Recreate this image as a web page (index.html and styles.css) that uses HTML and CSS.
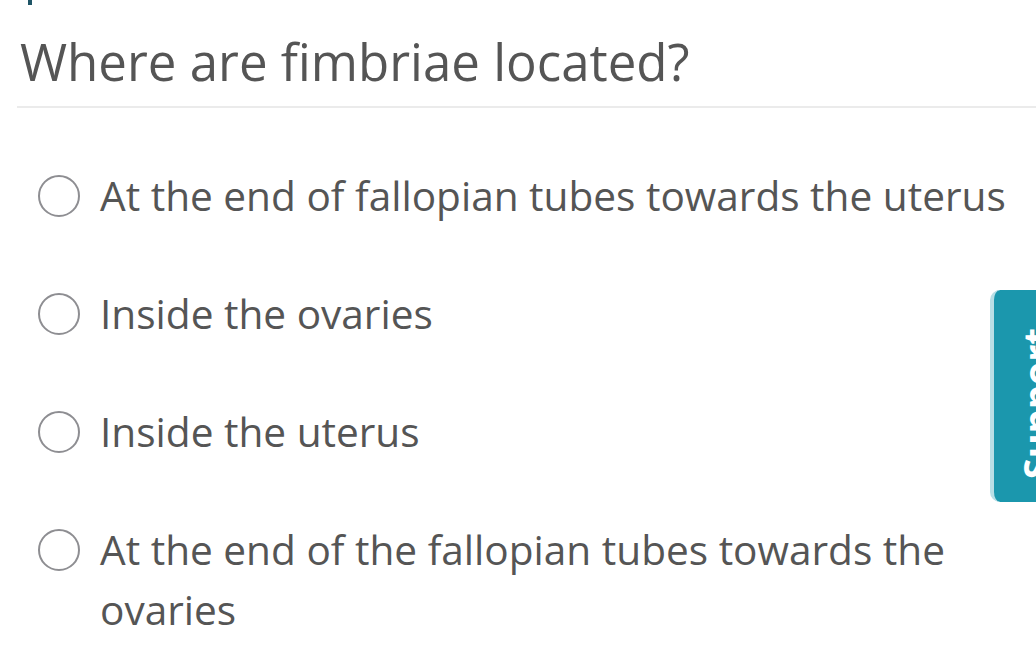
FILE: index.html
```html
<!DOCTYPE html>
<html lang="en">
<head>
    <meta charset="UTF-8">
    <meta name="viewport" content="width=device-width, initial-scale=1.0">
    <title>Question</title>
    <link rel="stylesheet" href="styles.css">
</head>
<body>
    <div class="top-mark"></div>

    <div class="question">
        <h1>Where are fimbriae located?</h1>
        <div class="divider"></div>

        <!-- Answers -->
        <div class="answers">
            <label class="answer">
                <span class="radio"></span>
                <span class="answer-text">At the end of fallopian tubes towards the uterus</span>
            </label>
            <label class="answer">
                <span class="radio"></span>
                <span class="answer-text">Inside the ovaries</span>
            </label>
            <label class="answer">
                <span class="radio"></span>
                <span class="answer-text">Inside the uterus</span>
            </label>
            <label class="answer">
                <span class="radio"></span>
                <span class="answer-text">At the end of the fallopian tubes towards the ovaries</span>
            </label>
        </div>
    </div>

    <!-- Support tab -->
    <div class="support-tab">
        <span>Support</span>
    </div>
</body>
</html>
```

FILE: styles.css
```css
body {
    margin: 0;
    background-color: #fff;
    font-family: "Open Sans", Arial, sans-serif;
    color: #555;
    overflow: hidden;
}
.top-mark {
    width: 4px;
    height: 5px;
    margin-left: 28px;
    background-color: #1f5566;
}
.question {
    padding-top: 26px;
}
.question h1 {
    font-size: 51px;
    font-weight: 400;
    line-height: 60px;
    margin: 0 0 15px 20px;
    color: #555;
}
.divider {
    height: 2px;
    margin-left: 17px;
    background-color: #ebebeb;
}
.answers {
    display: flex;
    flex-direction: column;
    gap: 58px;
    padding: 58px 0 0 38px;
}
.answer {
    display: flex;
    align-items: flex-start;
    gap: 20px;
    cursor: pointer;
}
.radio {
    flex: none;
    width: 38px;
    height: 38px;
    margin-top: 9px;
    border: 2.5px solid #8e8e92;
    border-radius: 50%;
}
.answer-text {
    font-size: 40.6px;
    line-height: 60px;
    max-width: 920px;
}
.support-tab {
    position: fixed;
    left: 990px;
    top: 290px;
    width: 80px;
    height: 212px;
    box-sizing: border-box;
    background-color: #1b97ad;
    border-left: 4px solid #b8dfe6;
    border-radius: 10px 0 0 10px;
    display: flex;
    align-items: center;
    padding: 16px 0 0 23px;
}
.support-tab span {
    writing-mode: vertical-rl;
    transform: rotate(180deg);
    color: #fff;
    font-weight: 700;
    font-size: 38px;
    line-height: 1;
}
```
